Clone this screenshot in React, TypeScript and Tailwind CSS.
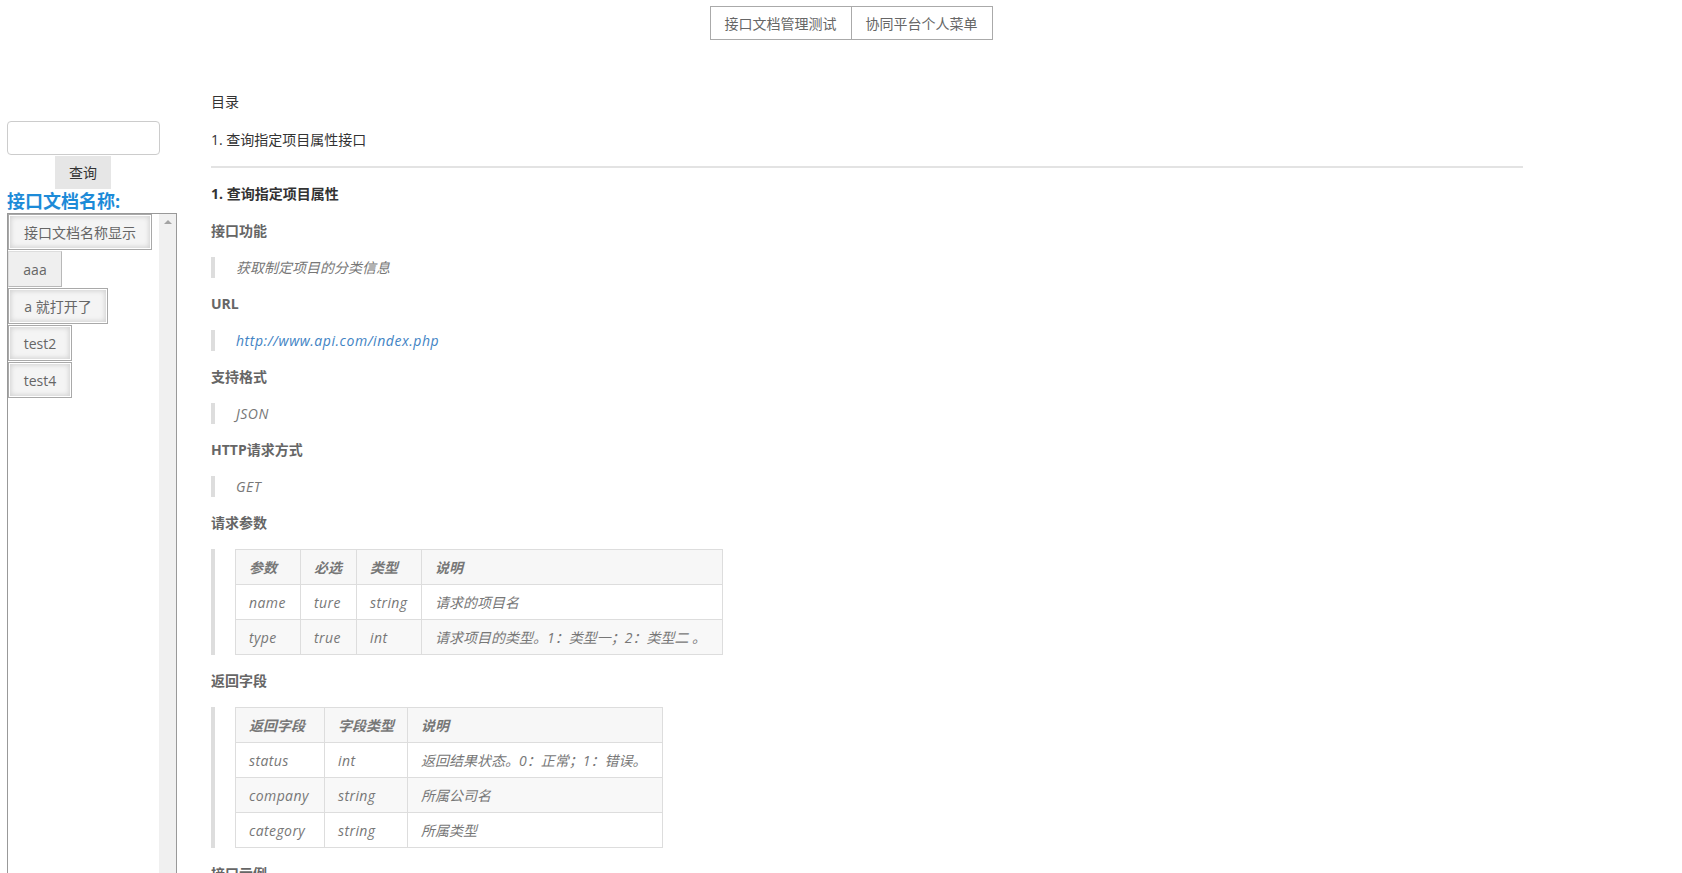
import React from 'react';

const font = { fontFamily: '"Open Sans", "Noto Sans CJK SC", sans-serif' };

const docs = [
  { name: '接口文档名称显示', bevel: true, w: 'w-[144px]' },
  { name: 'aaa', bevel: false, w: 'w-[54px]' },
  { name: 'a 就打开了', bevel: true, w: 'w-[100px]' },
  { name: 'test2', bevel: true, w: 'w-[64px]' },
  { name: 'test4', bevel: true, w: 'w-[64px]' },
];

const sections = [
  { title: '接口功能', value: '获取制定项目的分类信息', link: false },
  { title: 'URL', value: 'http://www.api.com/index.php', link: true },
  { title: '支持格式', value: 'JSON', link: false },
  { title: 'HTTP请求方式', value: 'GET', link: false },
];

const params = [
  ['name', 'ture', 'string', '请求的项目名'],
  ['type', 'true', 'int', '请求项目的类型。1：类型一；2：类型二 。'],
];

const fields = [
  ['status', 'int', '返回结果状态。0：正常；1：错误。'],
  ['company', 'string', '所属公司名'],
  ['category', 'string', '所属类型'],
];

// latin words in the doc are set a little wider than the CJK text
const isLatin = (s: string) => /^[\x00-\x7f]+$/.test(s);

function Heading({ children }: { children: React.ReactNode }) {
  return <div className="h-5 leading-5 font-bold text-[14px] text-[#666] mb-4">{children}</div>;
}

function Cell({ text }: { text: string }) {
  return (
    <td className={`h-[35px] border border-[#ddd] px-[13px] whitespace-nowrap ${isLatin(text) ? 'tracking-[0.4px]' : ''}`}>
      {text}
    </td>
  );
}

export default function App() {
  return (
    <div className="h-screen overflow-hidden bg-white text-[14px] text-[#333]" style={font}>
      {/* top menu */}
      <div className="flex justify-center pl-[20px] pt-[6px]">
        <div className="flex">
          <button className="w-[142px] h-[34px] border border-[#aaa] text-[14px] text-[#666]">接口文档管理测试</button>
          <button className="w-[141px] h-[34px] border border-l-0 border-[#aaa] text-[14px] text-[#666]">协同平台个人菜单</button>
        </div>
      </div>

      <div className="flex items-start">
        {/* sidebar */}
        <div className="w-[177px] pl-[7px] mt-[81px] shrink-0">
          <input className="block w-[153px] h-[34px] border border-[#ccc] rounded-[4px] outline-none px-2" />
          <button className="block ml-[48px] mt-[1px] w-[56px] h-[33px] bg-[#e6e6e6] text-[14px] text-[#333]">查询</button>
          <div className="h-[24px] leading-[24px] text-[18px] font-bold text-[#1d8bd8]">接口文档名称:</div>
          <div className="flex h-[700px] border border-[#999]">
            <div className="flex-1 flex flex-col gap-[1px]">
              {docs.map(d => (
                <div
                  key={d.name}
                  className={`${d.w} h-[36px] flex items-center justify-center text-[14px] text-[#666] border ${
                    d.bevel
                      ? 'border-[#a9a9a9] bg-[#f4f4f4] shadow-[inset_0_0_0_1px_#fff,inset_0_0_5px_2px_rgba(0,0,0,0.14)]'
                      : 'border-[#b8b8b8] border-l-[#ddd] border-t-[#ddd] bg-[#efefef]'
                  }`}
                >
                  {d.name}
                </div>
              ))}
            </div>
            <div className="w-[17px] bg-[#f0f0f0] flex justify-center pt-[6px]">
              <div className="w-0 h-0 border-l-[4px] border-r-[4px] border-b-[4px] border-l-transparent border-r-transparent border-b-[#a3a3a3]" />
            </div>
          </div>
        </div>

        {/* document */}
        <div className="ml-[34px] w-[1312px] mt-[52px]">
          <div className="h-5 leading-5">目录</div>
          <div className="h-5 leading-5 mt-[18px]">1. 查询指定项目属性接口</div>
          <div className="mt-[16px] border-t-2 border-[#e3e3e3]" />
          <div className="h-5 leading-5 mt-[16px] mb-[17px] font-bold text-[#333]">1. 查询指定项目属性</div>

          {sections.map(s => (
            <div key={s.title}>
              <Heading>{s.title}</Heading>
              <div className="border-l-4 border-[#ddd] pl-[21px] leading-[21px] h-[21px] italic mb-4">
                {s.link ? (
                  <span className="text-[#4183c4] tracking-[0.55px]">{s.value}</span>
                ) : (
                  <span className={`text-[#777] ${isLatin(s.value) ? 'tracking-[0.5px]' : ''}`}>{s.value}</span>
                )}
              </div>
            </div>
          ))}

          <Heading>请求参数</Heading>
          <div className="border-l-4 border-[#ddd] pl-[20px] mb-4">
            <table className="table-fixed border-collapse w-[488px] italic text-[#777] text-[14px]">
              <colgroup>
                <col className="w-[65px]" />
                <col className="w-[56px]" />
                <col className="w-[65px]" />
                <col />
              </colgroup>
              <thead>
                <tr className="bg-[#f7f7f7]">
                  {['参数', '必选', '类型', '说明'].map(h => (
                    <th key={h} className="h-[35px] border border-[#ddd] px-[13px] text-left font-bold">{h}</th>
                  ))}
                </tr>
              </thead>
              <tbody>
                {params.map((r, i) => (
                  <tr key={r[0]} className={i % 2 === 1 ? 'bg-[#f8f8f8]' : 'bg-white'}>
                    {r.map((c, j) => <Cell key={j} text={c} />)}
                  </tr>
                ))}
              </tbody>
            </table>
          </div>

          <Heading>返回字段</Heading>
          <div className="border-l-4 border-[#ddd] pl-[20px] mb-4">
            <table className="table-fixed border-collapse w-[428px] italic text-[#777] text-[14px]">
              <colgroup>
                <col className="w-[89px]" />
                <col className="w-[83px]" />
                <col />
              </colgroup>
              <thead>
                <tr className="bg-[#f7f7f7]">
                  {['返回字段', '字段类型', '说明'].map(h => (
                    <th key={h} className="h-[35px] border border-[#ddd] px-[13px] text-left font-bold">{h}</th>
                  ))}
                </tr>
              </thead>
              <tbody>
                {fields.map((r, i) => (
                  <tr key={r[0]} className={i % 2 === 1 ? 'bg-[#f8f8f8]' : 'bg-white'}>
                    {r.map((c, j) => <Cell key={j} text={c} />)}
                  </tr>
                ))}
              </tbody>
            </table>
          </div>

          <Heading>接口示例</Heading>
        </div>
      </div>
    </div>
  );
}
